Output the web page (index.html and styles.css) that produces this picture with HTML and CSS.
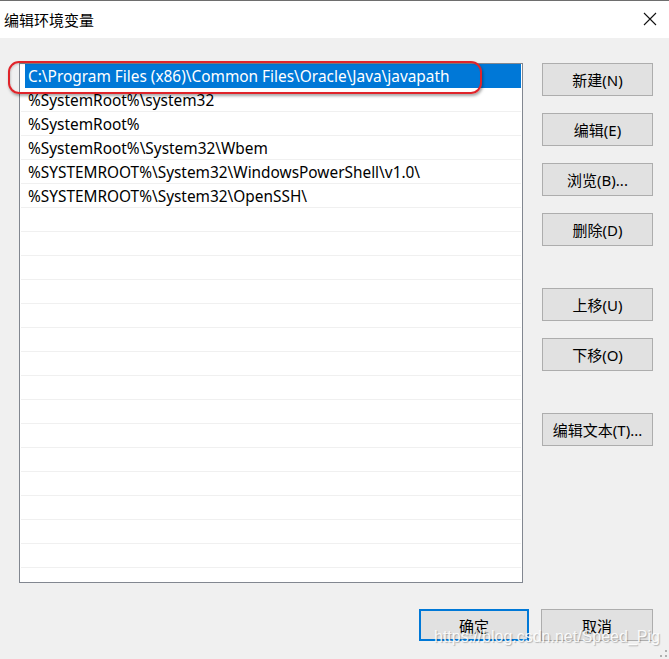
FILE: index.html
```html
<!DOCTYPE html>
<html lang="zh-CN">
<head>
<meta charset="utf-8">
<title>编辑环境变量</title>
<link rel="stylesheet" href="styles.css">
</head>
<body>
<div class="window">
  <div class="titlebar">
    <span class="title">编辑环境变量</span>
    <svg class="close" width="14" height="14" viewBox="0 0 14 14"><path d="M1 1 L13 13 M13 1 L1 13" stroke="#111" stroke-width="1.1" fill="none"/></svg>
  </div>
  <div class="body">
    <div class="main">
      <div class="list">
        <div class="row selected">C:\Program Files (x86)\Common Files\Oracle\Java\javapath</div>
        <div class="row">%SystemRoot%\system32</div>
        <div class="row">%SystemRoot%</div>
        <div class="row">%SystemRoot%\System32\Wbem</div>
        <div class="row">%SYSTEMROOT%\System32\WindowsPowerShell\v1.0\</div>
        <div class="row">%SYSTEMROOT%\System32\OpenSSH\</div>
        <div class="row"></div><div class="row"></div><div class="row"></div><div class="row"></div>
        <div class="row"></div><div class="row"></div><div class="row"></div><div class="row"></div>
        <div class="row"></div><div class="row"></div><div class="row"></div><div class="row"></div>
        <div class="row"></div><div class="row"></div><div class="row"></div>
      </div>
      <div class="side">
        <div class="btn">新建(N)</div>
        <div class="btn">编辑(E)</div>
        <div class="btn">浏览(B)...</div>
        <div class="btn">删除(D)</div>
        <div class="btn group">上移(U)</div>
        <div class="btn">下移(O)</div>
        <div class="btn group">编辑文本(T)...</div>
      </div>
    </div>
    <div class="footer">
      <div class="btn ok">确定</div>
      <div class="btn cancel">取消</div>
    </div>
  </div>
  <div class="annot"></div>
  <div class="watermark">https://blog.csdn.net/Speed_Pig</div>
  <svg class="grip" width="8" height="8" viewBox="0 0 8 8"><rect x="5" y="0" width="2" height="2" fill="#b0b0b0"/><rect x="0" y="5" width="2" height="2" fill="#b0b0b0"/><rect x="5" y="5" width="2" height="2" fill="#b0b0b0"/></svg>
</div>
</body>
</html>
```
FILE: styles.css
```css
* { box-sizing: border-box; }
html, body { margin: 0; padding: 0; }
body {
  width: 669px;
  height: 659px;
  overflow: hidden;
  background: #f0f0f0;
  font-family: "Noto Sans", "Noto Sans CJK SC", sans-serif;
  color: #000;
}
.window {
  position: relative;
  width: 669px;
  height: 659px;
}
.titlebar {
  height: 38px;
  background: #fff;
  border-top: 1px solid #6e6e6e;
  display: flex;
  align-items: center;
  justify-content: space-between;
  padding: 0 12px 0 4px;
}
.title {
  font-family: "Noto Sans CJK SC", sans-serif;
  font-size: 15px;
  margin-top: -1px;
}
.close { display: block; margin-top: -1px; }
.body {
  padding: 25px 16px 0 19px;
}
.main {
  display: flex;
  align-items: flex-start;
  gap: 19px;
}
.list {
  width: 504px;
  height: 520px;
  background: #fff;
  border: 1px solid #828790;
  padding: 0 1px;
  overflow: hidden;
}
.row {
  height: 24px;
  line-height: 22px;
  padding-top: 2px;
  border-bottom: 1px solid #f0f0f0;
  padding-left: 7px;
  font-size: 15.4px;
  white-space: nowrap;
}
.selected {
  margin-left: 4px;
  padding-left: 3px;
  background: #0078d7;
  color: #fff;
  border-bottom: none;
}
.side {
  display: flex;
  flex-direction: column;
  gap: 17px;
}
.btn {
  width: 111px;
  height: 33px;
  background: #e1e1e1;
  border: 1px solid #adadad;
  display: flex;
  align-items: center;
  justify-content: center;
  font-family: "Noto Sans", "Noto Sans CJK SC", sans-serif;
  font-size: 15px;
}
.side .group { margin-top: 25px; }
.footer {
  display: flex;
  justify-content: flex-end;
  gap: 12px;
  margin-top: 26px;
}
.footer .btn { height: 32px; }
.ok {
  width: 110px;
  border: 2px solid #0078d7;
}
.cancel { width: 112px; }
.annot {
  position: absolute;
  left: 8px;
  top: 61px;
  width: 474px;
  height: 33px;
  border: 2px solid #e0242a;
  border-radius: 11px;
  box-shadow: 1px 2px 3px rgba(0,0,0,0.35), inset 1px 1px 2px rgba(0,0,0,0.15);
}
.watermark {
  position: absolute;
  left: 434px;
  top: 628px;
  font-family: "Liberation Sans", sans-serif;
  font-size: 16px;
  color: rgba(255,255,255,0.9);
  text-shadow: 1px 1px 1px rgba(0,0,0,0.25);
  white-space: nowrap;
}
.grip {
  position: absolute;
  right: 1px;
  bottom: 1px;
}
```
